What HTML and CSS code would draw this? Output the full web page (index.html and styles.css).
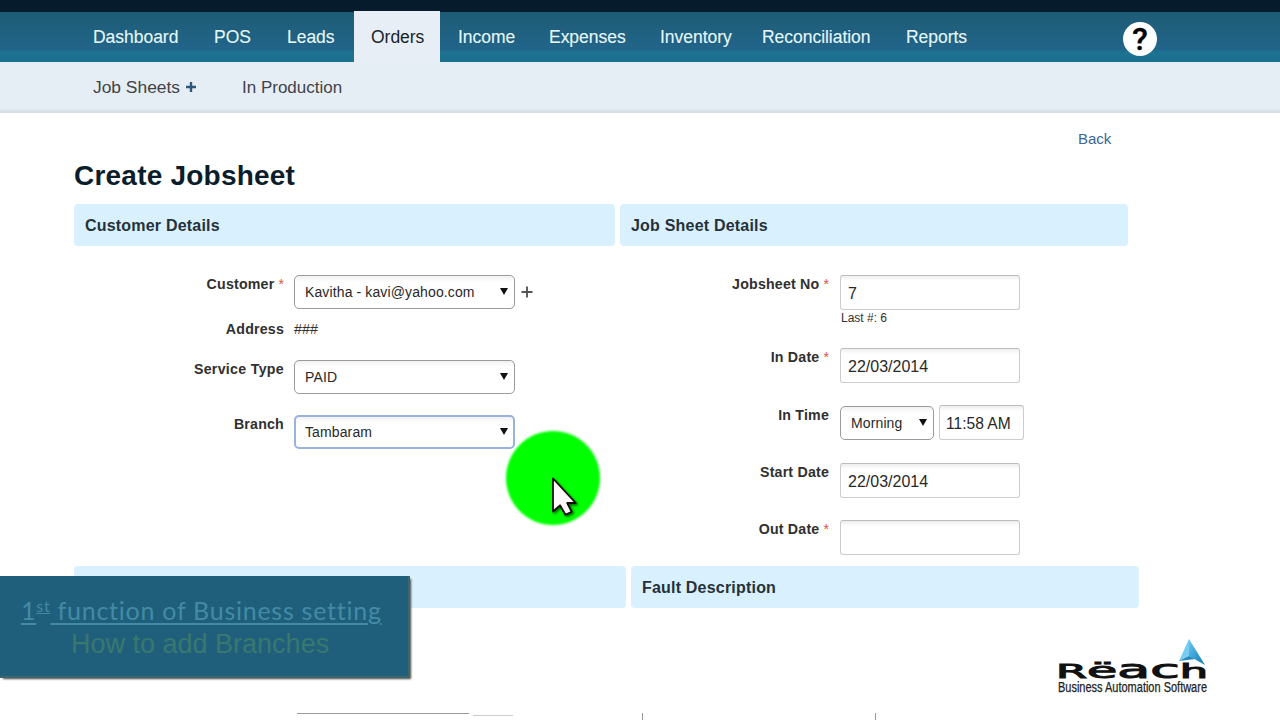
FILE: index.html
```html
<!DOCTYPE html>
<html lang="en">
<head>
<meta charset="utf-8">
<title>Create Jobsheet</title>
<link rel="stylesheet" href="styles.css">
</head>
<body>
<div class="topbar"></div>
<nav class="nav">
  <a>Dashboard</a><a>POS</a><a>Leads</a><a class="active">Orders</a><a>Income</a><a>Expenses</a><a>Inventory</a><a>Reconciliation</a><a>Reports</a>
  <span class="help">?</span>
</nav>
<div class="subnav">
  <a class="jobs">Job Sheets <svg width="12" height="12" viewBox="0 0 12 12"><path d="M6 1v10M1 6h10" stroke="#2f5878" stroke-width="2.4"/></svg></a>
  <a class="prod">In Production</a>
</div>
<main class="page">
  <div class="back"><a>Back</a></div>
  <h1>Create Jobsheet</h1>
  <div class="heads"><h2>Customer Details</h2><h2>Job Sheet Details</h2></div>
  <div class="forms">
    <section class="left">
      <div class="row r-customer"><label>Customer <i>*</i></label><div class="select wide"><span>Kavitha - kavi@yahoo.com</span><b></b></div><svg class="add" width="12" height="12" viewBox="0 0 12 12"><path d="M6 .5v11M.5 6h11" stroke="#555" stroke-width="1.9"/></svg></div>
      <div class="row r-address"><label>Address</label><span class="plain">###</span></div>
      <div class="row r-service"><label class="roomy">Service Type</label><div class="select wide"><span>PAID</span><b></b></div></div>
      <div class="row"><label>Branch</label><div class="select wide focus"><span>Tambaram</span><b></b></div></div>
    </section>
    <section class="right">
      <div class="row r-no"><label>Jobsheet No <i>*</i></label><div><div class="input">7</div><div class="hint">Last #: 6</div></div></div>
      <div class="row r-in"><label>In Date <i>*</i></label><div class="input">22/03/2014</div></div>
      <div class="row r-time"><label>In Time</label><div class="select short"><span>Morning</span><b></b></div><div class="input time">11:58 AM</div></div>
      <div class="row r-start"><label>Start Date</label><div class="input">22/03/2014</div></div>
      <div class="row"><label>Out Date <i>*</i></label><div class="input"></div></div>
    </section>
  </div>
  <div class="heads second"><h2></h2><h2>Fault Description</h2></div>
  <div class="next"><span class="edge-select"></span><span class="edge-input"></span><span class="edge-area"></span></div>
</main>
<svg class="pointer" width="100" height="100" viewBox="0 0 100 100">
  <defs>
    <filter id="soft" x="-10%" y="-10%" width="120%" height="120%"><feGaussianBlur stdDeviation="1"/></filter>
    <filter id="drop" x="-30%" y="-30%" width="180%" height="180%"><feDropShadow dx="1.5" dy="1.5" stdDeviation="1" flood-opacity=".6"/></filter>
  </defs>
  <circle cx="50" cy="50" r="47" fill="#00ff00" filter="url(#soft)"/>
  <path d="M50 50.5v33l7-6.2 5.5 9.5 6.2-3-4.5-8.8h8.5z" fill="#fff8fc" stroke="#160a10" stroke-width="1.8" stroke-linejoin="round" filter="url(#drop)"/>
</svg>
<aside class="caption">
  <p class="cap-one"><u>1</u><sup>st</sup><u> function of Business setting</u></p>
  <p class="cap-two">How to add Branches</p>
</aside>
<svg class="logo" width="170" height="68" viewBox="0 0 170 68">
  <defs><linearGradient id="sky" x2="1" y2="1"><stop offset="0" stop-color="#6cc8f0"/><stop offset="1" stop-color="#0b78b8"/></linearGradient></defs>
  <text class="word" x="0" y="41" font-size="20" transform="translate(6 0) scale(1.9 1)" textLength="80" lengthAdjust="spacingAndGlyphs">R<tspan font-size="22">ë</tspan><tspan font-size="24">ac</tspan>h</text>
  <path d="M139 2l-10 22 10-5z" fill="#77cdf1"/><path d="M139 2v17l16 9z" fill="url(#sky)"/><path d="M129 24l10-5 6 3z" fill="#2389bd"/>
  <text class="tag" x="8" y="55" font-size="14" textLength="149" lengthAdjust="spacingAndGlyphs">Business Automation Software</text>
</svg>
</body>
</html>
```
FILE: styles.css
```css
* { box-sizing: border-box; }
body { margin: 0; width: 1280px; height: 720px; overflow: hidden; position: relative; background: #fff; color: #303030; font-family: "Liberation Sans", Arial, sans-serif; }
.topbar { height: 12px; background: #061b2b; }
.nav { height: 50px; padding-left: 76px; display: grid; grid-template-columns: 121px 73px 84px 87px 91px 111px 102px 144px 217px 60px; background: linear-gradient(#1d5c75, #22658a 75%, #1d7191 80%, #1c7190); color: #e3f9ff; font-size: 17.5px; line-height: 50px; text-shadow: 0 0 1px #1b4c61; }
.nav a { padding-left: 17px; white-space: nowrap; letter-spacing: -.03px; -webkit-text-stroke: .15px currentColor; }
.nav .active { width: 86px; height: 51px; margin-top: -1px; line-height: 52px; background: #e7eef5; color: #18242c; text-shadow: none; -webkit-text-stroke: 0; }
.help { width: 34px; height: 34px; margin: 10px 0 0 17px; border-radius: 50%; background: #fff; color: #000; font: 500 32px/35px Roboto, sans-serif; text-align: center; text-shadow: none; -webkit-text-stroke: .3px #000; }
.subnav { height: 51px; padding-left: 93px; display: flex; background: linear-gradient(#e6eef5 92%, #d6dde4); border-bottom: 1px solid #dadfe3; color: #414347; font-size: 17.4px; line-height: 51px; }
.jobs { width: 149px; }
.jobs svg { vertical-align: 0; }
.prod { font-size: 17px; }
.page { padding-left: 74px; }
.back { height: 49px; padding: 17px 0 0 1004px; color: #3b6794; font-size: 15px; line-height: 18px; }
h1 { margin: 0; height: 42px; color: #0b1d2b; font-size: 28px; line-height: 28px; letter-spacing: .22px; }
.heads { display: grid; grid-template-columns: 541px 508px; gap: 5px; height: 42px; }
h2 { margin: 0; padding-left: 11px; border-radius: 4px; background: #d9f1fe; color: #26313a; font-size: 16px; line-height: 43px; letter-spacing: .2px; overflow: hidden; }
.forms { display: grid; grid-template-columns: 546px 508px; height: 320px; padding-top: 29px; }
.row { display: flex; align-items: flex-start; }
.row label { width: 210px; margin-right: 10px; text-align: right; font-size: 14.2px; line-height: 18px; font-weight: bold; letter-spacing: .2px; }
.row label.roomy { letter-spacing: .3px; }
.row label i { color: #dc5144; font-style: normal; font-weight: normal; font-size: 14px; letter-spacing: 0; }
.select { height: 34px; display: flex; align-items: center; justify-content: space-between; padding: 0 6px 1px 10px; border: 1px solid #9b9b9b; border-radius: 5px; background: linear-gradient(#f1f1f1, #fff 6px); font-size: 14px; letter-spacing: .12px; color: #282828; }
.select b { border: 4px solid transparent; border-top: 7px solid #111; border-bottom: 0; margin-top: -1px; }
.wide { width: 221px; }
.short { width: 94px; }
.focus { border: 2px solid #96b4df; padding-left: 9px; padding-right: 5px; }
.add { margin: 11px 0 0 6px; }
.r-customer { height: 45px; }
.r-address { height: 40px; }
.plain { font-size: 14.3px; line-height: 18px; }
.r-service { height: 55px; }
.right label { width: 209px; margin-right: 11px; }
.input { width: 180px; height: 35px; padding-left: 7px; border: 1px solid #ccc; border-top-color: #bcbcbc; border-radius: 3px; background: linear-gradient(#eee, #fff 5px); color: #282828; font-size: 16px; line-height: 35px; }
.hint { margin: 1px 0 0 1px; font-size: 12px; line-height: 14px; }
.time { width: 85px; margin-left: 5px; margin-top: -1px; padding-left: 6px; font-size: 15.6px; }
.r-no { height: 73px; }
.r-in { height: 58px; }
.r-time { height: 57px; }
.r-start { height: 57px; }
.second { grid-template-columns: 552px 508px; }
.next { display: flex; margin-top: 105px; }
.edge-select { width: 172px; height: 1px; margin: 0 4px 0 223px; background: #999; }
.edge-input { width: 40px; height: 1px; margin: 2px 129px 0 0; background: #ccc; }
.edge-area { width: 234px; height: 8px; border: solid #999; border-width: 0 1px; }
.pointer { position: absolute; left: 503px; top: 428px; }
.caption { position: absolute; left: 0; top: 576px; width: 408px; height: 100px; background: #1f5f7b; box-shadow: 1px 1px 0 1px #3c656c, 3px 3px 2px #444; white-space: nowrap; }
.caption p { margin: 0; line-height: 34px; }
.caption .cap-one { padding: 17px 0 0 21px; color: #438ba5; font-family: "Lato", sans-serif; font-size: 25px; font-variant-ligatures: none; letter-spacing: .74px; }
.cap-one sup { font-size: 16px; line-height: 0; text-decoration: underline; vertical-align: 8px; }
.cap-one u { text-underline-offset: 3px; text-decoration-thickness: 2px; }
.caption .cap-two { padding-left: 71px; color: #39786f; font-size: 27px; line-height: 35px; }
.logo { position: absolute; left: 1050px; top: 637px; }
.word { fill: #111; font-family: "DejaVu Sans", sans-serif; stroke: #111; stroke-width: 1px; }
.tag { fill: #222; stroke: #222; stroke-width: .25px; font-family: "Liberation Sans", Arial, sans-serif; }
```
